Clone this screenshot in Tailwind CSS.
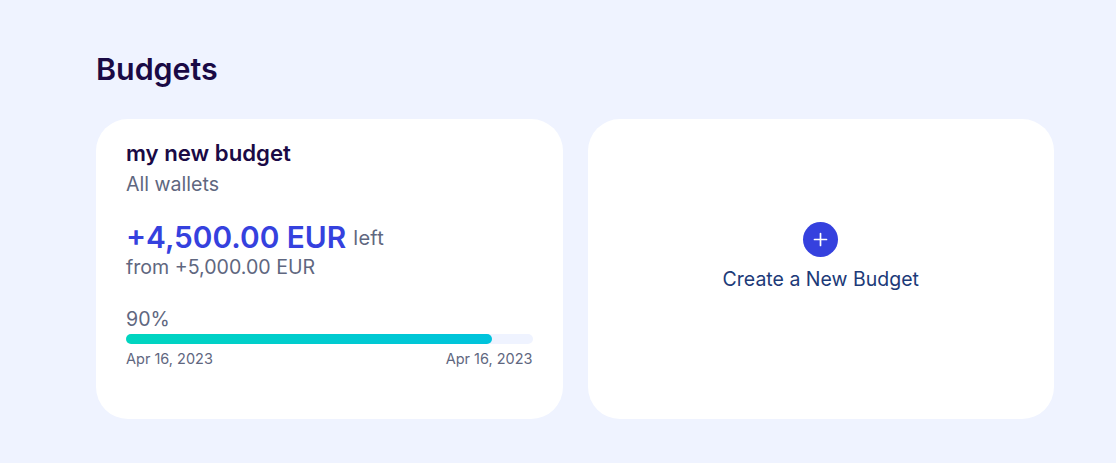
<!DOCTYPE html>
<html lang="en">
<head>
    <meta charset="UTF-8">
    <title>Budgets</title>
    <script src="https://cdn.jsdelivr.net/npm/@tailwindcss/browser@4"></script>
</head>
<body class="bg-[#eff3ff] font-['Inter',sans-serif]">
    <div class="h-[463px] pl-[96px] pt-[52px] overflow-hidden">
        <h1 class="text-[30.4px] leading-[34px] font-semibold text-[#1a0a45]">Budgets</h1>

        <div class="mt-[33px] w-[958px] grid grid-cols-2 gap-[25px]">
            <!-- budget card -->
            <div class="h-[300px] bg-white rounded-[32px] px-[30px] pt-[20px]">
                <div class="text-[22.2px] leading-[28px] font-semibold text-[#1a0a45]">my new budget</div>
                <div class="mt-[5px] text-[19.6px] leading-[24px] text-[#5f6780]">All wallets</div>

                <div class="mt-[23px] flex items-baseline gap-[7px] leading-[36px]">
                    <span class="text-[29.8px] font-semibold text-[#3541de]">+4,500.00 EUR</span>
                    <span class="text-[20px] text-[#5f6780] tracking-[0.3px] -translate-y-[3px]">left</span>
                </div>
                <div class="-mt-[4px] text-[19.6px] leading-[24px] text-[#5f6780]">from +5,000.00 EUR</div>

                <div class="mt-[28px] text-[19.6px] leading-[24px] text-[#5f6780]">90%</div>
                <div class="mt-[3px] h-[10px] rounded-full bg-[#eff3ff]">
                    <div class="h-full w-[90%] rounded-full bg-gradient-to-r from-[#00d5bf] to-[#00c3dc]"></div>
                </div>
                <div class="mt-[6px] flex justify-between text-[14.5px] leading-[18px] text-[#5f6780]">
                    <span>Apr 16, 2023</span>
                    <span>Apr 16, 2023</span>
                </div>
            </div>

            <!-- create card -->
            <div class="h-[300px] bg-white rounded-[32px] flex flex-col items-center pt-[103px]">
                <div class="w-[35px] h-[35px] rounded-full bg-[#3541de] flex items-center justify-center">
                    <svg width="15" height="15" viewBox="0 0 15 15" fill="none" stroke="white" stroke-width="1.7" stroke-linecap="round">
                        <path d="M7.5 1.5v12M1.5 7.5h12"/>
                    </svg>
                </div>
                <div class="mt-[9px] text-[19.5px] leading-[26px] text-[#1c3a78]">Create a New Budget</div>
            </div>
        </div>
    </div>
</body>
</html>
